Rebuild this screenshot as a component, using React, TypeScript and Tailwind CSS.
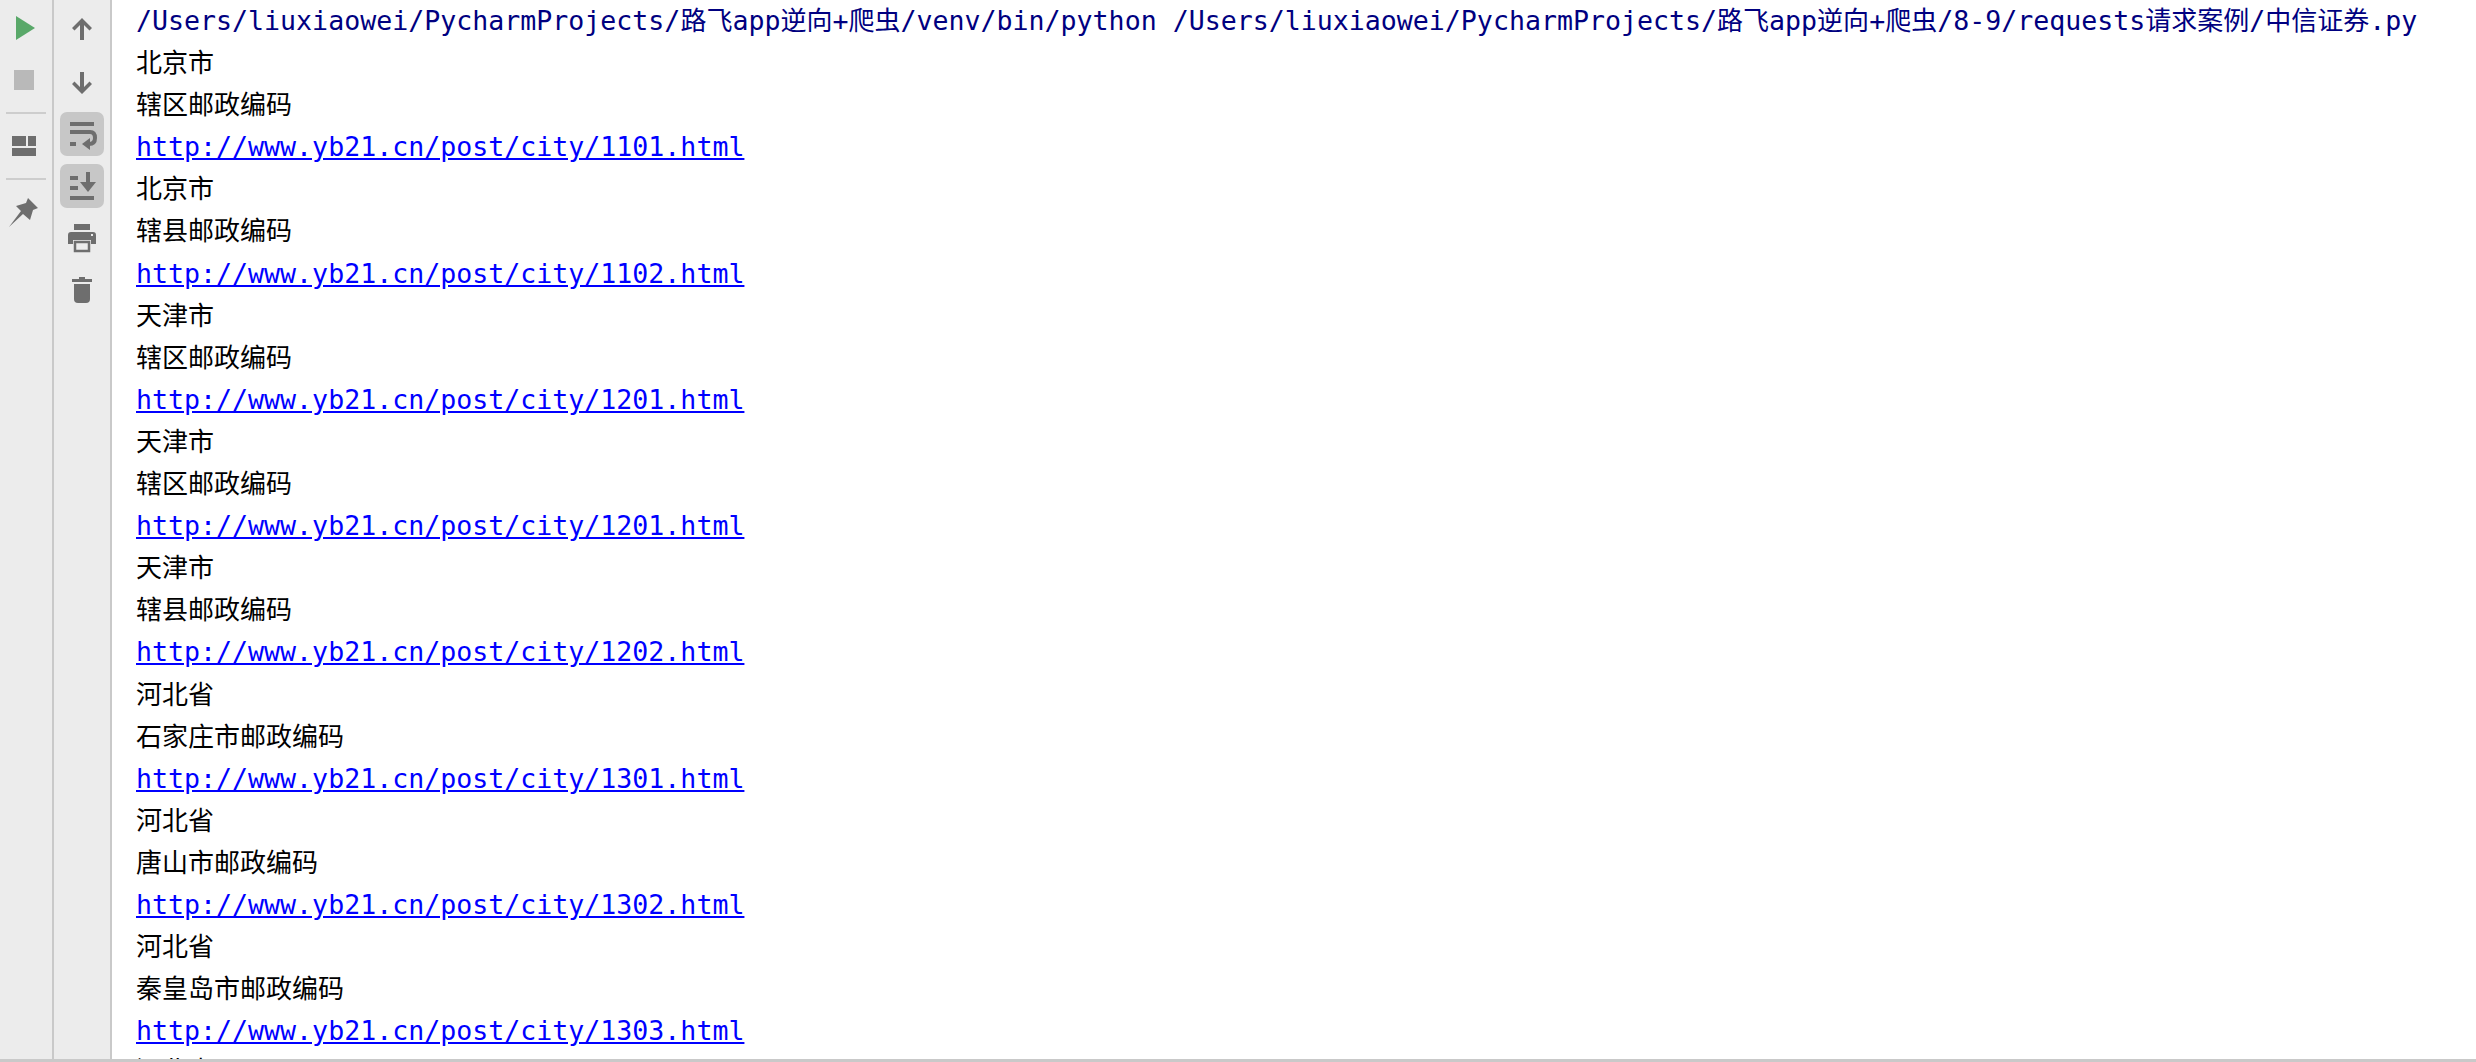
const commandLine =
  '/Users/liuxiaowei/PycharmProjects/路飞app逆向+爬虫/venv/bin/python /Users/liuxiaowei/PycharmProjects/路飞app逆向+爬虫/8-9/requests请求案例/中信证券.py'

const rows = [
  ['北京市', '辖区邮政编码', '1101'],
  ['北京市', '辖县邮政编码', '1102'],
  ['天津市', '辖区邮政编码', '1201'],
  ['天津市', '辖区邮政编码', '1201'],
  ['天津市', '辖县邮政编码', '1202'],
  ['河北省', '石家庄市邮政编码', '1301'],
  ['河北省', '唐山市邮政编码', '1302'],
  ['河北省', '秦皇岛市邮政编码', '1303'],
]

function Icon({ children }: { children: React.ReactNode }) {
  return (
    <svg width="44" height="44" viewBox="0 0 44 44" fill="#6e6e6e">
      {children}
    </svg>
  )
}

function Button({ active, children }: { active?: boolean; children: React.ReactNode }) {
  return (
    <div className={`h-11 w-11 shrink-0 rounded-[7px] ${active ? 'bg-[#c7c7c7]' : ''}`}>
      <Icon>{children}</Icon>
    </div>
  )
}

function Separator() {
  return <div className="my-2.5 h-0.5 w-10 shrink-0 bg-[#cdcdcd]" />
}

// o texto chinês fica em 26px, o latino mantém a largura de 16px por caractere
function Mixed({ text }: { text: string }) {
  const parts = text.split(/([\u4e00-\u9fff]+)/)
  return (
    <>
      {parts.map((part, i) =>
        i % 2 === 1 ? (
          <span key={i} className="text-[26px]">
            {part}
          </span>
        ) : (
          part
        ),
      )}
    </>
  )
}

export default function App() {
  return (
    <div className="flex h-[1062px] w-full flex-col overflow-hidden bg-white">
      <div className="flex min-h-0 flex-1">
        {/* run toolbar */}
        <div className="flex w-[54px] shrink-0 flex-col items-center border-r-2 border-[#c9c9c9] bg-[#ececec] pt-1.5">
          <Button>
            <path d="M12 10 L31 22 L12 34 Z" fill="#59a869" />
          </Button>
          <div className="mt-2 h-11 w-11 shrink-0">
            <Icon>
              <rect x="10" y="12" width="20" height="20" fill="#b9b9b9" />
            </Icon>
          </div>
          <Separator />
          <Button>
            <rect x="8" y="12" width="14" height="10" />
            <rect x="24" y="12" width="8" height="10" />
            <rect x="8" y="24" width="24" height="8" />
          </Button>
          <Separator />
          <Button>
            <path d="M24 8 L34 18 L29 20 L26 30 L19 24 L5 37 L17 21 L12 16 L22 13 Z" />
          </Button>
        </div>

        {/* console toolbar */}
        <div className="flex w-[58px] shrink-0 flex-col items-center gap-2 border-r-2 border-[#c9c9c9] bg-[#ececec] pt-2">
          <Button>
            <rect x="20" y="12" width="4" height="20" />
            <path d="M22 10 L32 20 L29.5 22.5 L22 15 L14.5 22.5 L12 20 Z" />
          </Button>
          <Button>
            <rect x="20" y="12" width="4" height="20" />
            <path d="M22 34 L32 24 L29.5 21.5 L22 29 L14.5 21.5 L12 24 Z" />
          </Button>
          <Button active>
            <rect x="10" y="10" width="24" height="4" />
            <rect x="10" y="30" width="6" height="4" />
            <path d="M10 20 H30 Q35 20 35 26 Q35 32 29 32 H27" fill="none" stroke="#6e6e6e" strokeWidth="4" />
            <path d="M30 26 L22 32 L30 38 Z" />
          </Button>
          <Button active>
            <rect x="10" y="12" width="8" height="4" />
            <rect x="10" y="22" width="8" height="4" />
            <rect x="10" y="32" width="24" height="4" />
            <rect x="26" y="8" width="4" height="14" />
            <path d="M20 18 H36 L28 28 Z" />
          </Button>
          <Button>
            <rect x="14" y="8" width="16" height="6" />
            <path d="M8 19 Q8 16 11 16 H33 Q36 16 36 19 V28 H31 V24 H13 V28 H8 Z" />
            <path d="M15 26 H29 V35 H15 Z" fill="none" stroke="#6e6e6e" strokeWidth="2.5" />
            <rect x="31" y="18" width="2" height="2" fill="#ececec" />
          </Button>
          <Button>
            <path d="M19 9 H25 V11 H32 V14 H12 V11 H19 Z" />
            <path d="M14 16 H30 V31 Q30 35 26 35 H18 Q14 35 14 31 Z" />
          </Button>
        </div>

        {/* console output */}
        <div className="min-w-0 flex-1 overflow-hidden whitespace-nowrap pl-6 text-[26.6px] leading-[42px] text-black [font-family:'DejaVu_Sans_Mono','Noto_Sans_CJK_SC',monospace]">
          <div className="h-[42.1px] text-[#000080]">
            <Mixed text={commandLine} />
          </div>
          {rows.map(([province, label, code], i) => {
            const url = `http://www.yb21.cn/post/city/${code}.html`
            return (
              <div key={i} className="[&>div:not(:last-child)]:text-[26px]">
                <div className="h-[42.1px]">{province}</div>
                <div className="h-[42.1px]">{label}</div>
                <div className="h-[42.1px]">
                  <a href={url} className="text-[#0000ff] underline">
                    {url}
                  </a>
                </div>
              </div>
            )
          })}
          <div className="h-[42.1px] -translate-y-0.5 text-[26px]">河北省</div>
        </div>
      </div>
      <div className="h-[3px] shrink-0 bg-[#c9c9c9]" />
    </div>
  )
}
